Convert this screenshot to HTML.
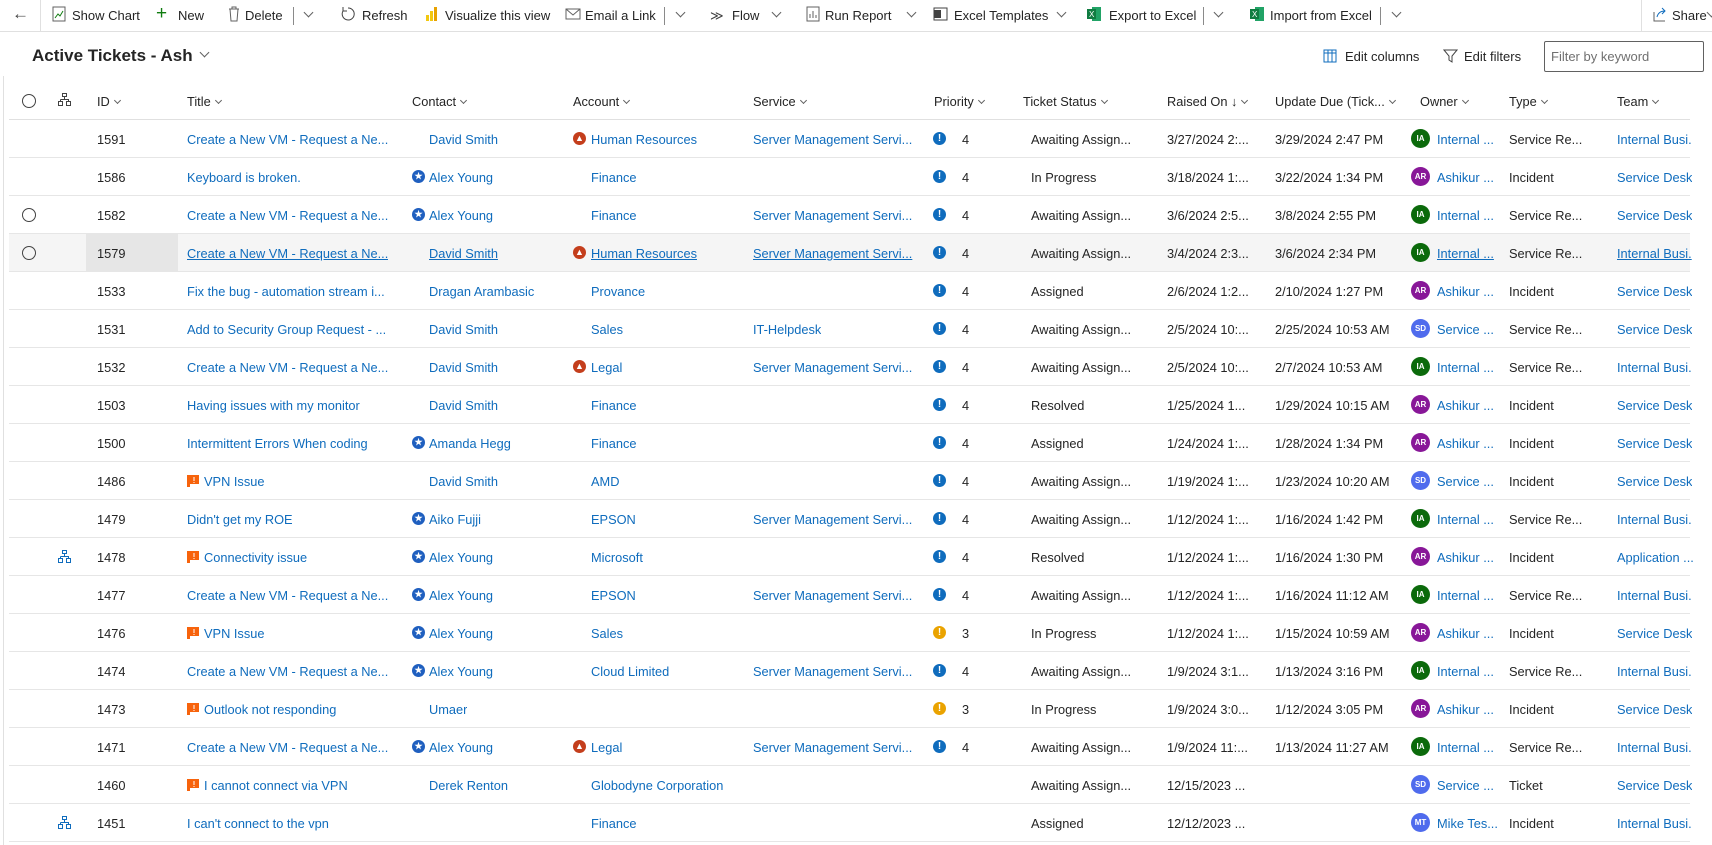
<!DOCTYPE html>
<html><head><meta charset="utf-8">
<style>
*{box-sizing:border-box;margin:0;padding:0}
body{width:1712px;height:845px;overflow:hidden;background:#fff;font-family:"Liberation Sans",Arial,sans-serif;color:#242424;position:relative}
.tb{position:absolute;left:0;top:0;width:1712px;height:32px;border-bottom:1px solid #e0e0e0;font-size:13px}
.tb span{position:absolute;top:8px;white-space:nowrap}
.tb .ic{position:absolute;top:6px}
.sep{position:absolute;top:7px;width:1px;height:18px;background:#8a8a8a}
.chev{position:absolute;top:9px;width:7px;height:7px;border-right:1px solid #616161;border-bottom:1px solid #616161;transform:rotate(45deg)}
.title{position:absolute;left:32px;top:46px;font-size:17px;font-weight:bold;color:#242424}
.grid{position:absolute;left:3px;top:76px;width:1px;height:769px;background:#e0e0e0}
.hdr{position:absolute;left:9px;top:82px;width:1681px;height:38px;border-bottom:1px solid #e0e0e0;font-size:12.8px}
.hdr span{position:absolute;top:12px;white-space:nowrap}
.hc{display:inline-block;width:5px;height:5px;border-right:1px solid #616161;border-bottom:1px solid #616161;transform:rotate(45deg);margin-left:5px;position:relative;top:-3px}
.row{position:absolute;left:9px;width:1681px;height:38px;border-bottom:1px solid #e6e6e6;font-size:12.8px}
.row>*{position:absolute;top:12px;white-space:nowrap;overflow:hidden}
.l{color:#0f6cbd}
.sel{background:#f5f5f5}
.sel .u{text-decoration:underline}
.idsel{position:absolute;left:77px;top:0!important;width:92px;height:37px;background:#e6e6e6}
.ci{position:absolute;width:13px;height:13px;border-radius:50%;top:12px!important;color:#fff;font-style:normal;text-align:center;font-size:9px;line-height:13px;font-weight:bold}
.pri{background:#0f6cbd;font-size:10px}
.pri3{background:#eaa300}
.acc{background:#c43e1c}
.con{background:#1f5fbf}
.av{position:absolute;width:19px;height:19px;border-radius:50%;color:#fff;font-size:8px;font-style:normal;font-weight:bold;text-align:center;line-height:19px;top:9px!important}
.ia{background:#0b6a0b}.ar{background:#881798}.sd{background:#4f6bed}.mt{background:#4f6bed}
.flag{position:absolute;top:13px!important;width:12px;height:12px}
.circ{position:absolute;left:13px;top:12px!important;width:14px;height:14px;border:1px solid #424242;border-radius:50%}
</style></head><body>
<div class="tb">
<span style="left:12px;top:4px;font-size:17px;color:#424242">←</span>
<div class="sep" style="left:40px;top:0;height:32px;background:#e0e0e0"></div>
<svg class="ic" style="left:52px" width="14" height="16" viewBox="0 0 14 16"><rect x="1" y="1" width="12" height="14" fill="none" stroke="#616161"/><path d="M3 12l3-4 2 2 3-5" stroke="#107c10" fill="none"/></svg><span style="left:72px">Show Chart</span>
<span style="left:156px;top:3px;font-size:19px;color:#107c10">+</span><span style="left:178px">New</span>
<svg class="ic" style="left:228px" width="12" height="16" viewBox="0 0 12 16"><path d="M1 3h10M4 3V1h4v2M2 3l1 12h6l1-12" fill="none" stroke="#616161"/></svg><span style="left:245px">Delete</span>
<div class="sep" style="left:293px"></div><div class="chev" style="left:305px"></div>
<svg class="ic" style="left:340px" width="16" height="16" viewBox="0 0 16 16"><path d="M8 2a6 6 0 1 1-5 3M3 1v4h4" fill="none" stroke="#424242"/></svg><span style="left:362px">Refresh</span>
<svg class="ic" style="left:426px" width="12" height="16" viewBox="0 0 12 16"><rect x="8" y="1" width="3" height="14" fill="#e8a200"/><rect x="4" y="5" width="3" height="10" fill="#f2c811"/><rect x="0" y="9" width="3" height="6" fill="#f2c811"/></svg><span style="left:445px">Visualize this view</span>
<svg class="ic" style="left:565px" width="16" height="16" viewBox="0 0 16 16"><rect x="1" y="3" width="14" height="10" fill="none" stroke="#616161"/><path d="M1 3l7 6 7-6" fill="none" stroke="#616161"/></svg><span style="left:585px">Email a Link</span>
<div class="sep" style="left:664px"></div><div class="chev" style="left:677px"></div>
<span style="left:710px;color:#424242">≫</span><span style="left:732px">Flow</span><div class="chev" style="left:773px"></div>
<svg class="ic" style="left:806px" width="14" height="16" viewBox="0 0 14 16"><rect x="1" y="1" width="12" height="14" fill="none" stroke="#616161"/><path d="M4 12V8M7 12V5M10 12V9" stroke="#616161"/></svg><span style="left:825px">Run Report</span><div class="chev" style="left:908px"></div>
<svg class="ic" style="left:933px" width="15" height="16" viewBox="0 0 15 16"><rect x="1" y="2" width="13" height="12" fill="none" stroke="#424242"/><rect x="1" y="4" width="7" height="8" fill="#424242"/></svg><span style="left:954px">Excel Templates</span><div class="chev" style="left:1058px"></div>
<svg class="ic" style="left:1087px" width="15" height="16" viewBox="0 0 15 16"><rect x="5" y="1" width="9" height="14" fill="#21a366"/><rect x="0" y="3" width="9" height="10" fill="#107c41"/><text x="2" y="11" font-size="8" fill="#fff" font-family="Liberation Sans">X</text></svg><span style="left:1109px">Export to Excel</span>
<div class="sep" style="left:1203px"></div><div class="chev" style="left:1215px"></div>
<svg class="ic" style="left:1250px" width="15" height="16" viewBox="0 0 15 16"><rect x="5" y="1" width="9" height="14" fill="#21a366"/><rect x="0" y="3" width="9" height="10" fill="#107c41"/><text x="2" y="11" font-size="8" fill="#fff" font-family="Liberation Sans">X</text></svg><span style="left:1270px">Import from Excel</span>
<div class="sep" style="left:1380px"></div><div class="chev" style="left:1393px"></div>
<div class="sep" style="left:1641px;top:0;height:32px;background:#e0e0e0"></div>
<svg class="ic" style="left:1653px" width="14" height="16" viewBox="0 0 14 16"><path d="M1 6v9h11" fill="none" stroke="#616161"/><path d="M4 11c1-4 4-6 8-6M9 2l3 3-3 3" fill="none" stroke="#0f6cbd"/></svg><span style="left:1672px">Share</span><div class="chev" style="left:1708px"></div>
</div>
<div class="title">Active Tickets - Ash <span class="hc" style="width:7px;height:7px;top:-5px;margin-left:4px"></span></div>
<svg style="position:absolute;left:1323px;top:49px" width="16" height="15" viewBox="0 0 16 15"><rect x="1" y="1" width="12" height="12" fill="none" stroke="#0f6cbd"/><path d="M1 4h12M5 1v12M9 1v12" stroke="#0f6cbd"/></svg>
<span style="position:absolute;left:1345px;top:49px;font-size:13px">Edit columns</span>
<svg style="position:absolute;left:1443px;top:49px" width="15" height="15" viewBox="0 0 15 15"><path d="M1 1h13l-5 6v6l-3-2V7z" fill="none" stroke="#424242"/></svg>
<span style="position:absolute;left:1464px;top:49px;font-size:13px">Edit filters</span>
<div style="position:absolute;left:1544px;top:41px;width:160px;height:31px;border:1px solid #616161;border-radius:2px;font-size:13px;color:#707070;padding:7px 6px">Filter by keyword</div>
<div class="grid"></div>
<div class="hdr">
<div class="circ" style="top:12px"></div>
<svg style="position:absolute;left:49px;top:11px" width="13" height="13" viewBox="0 0 13 13"><path d="M4.5 .5h4v3h-4zM6.5 3.5v3M2.5 6.5h8v2M2.5 6.5v2M.5 8.5h4v4h-4zM8.5 8.5h4v4h-4z" fill="none" stroke="#424242"/></svg>
<span style="left:88px">ID<i class="hc"></i></span>
<span style="left:178px">Title<i class="hc"></i></span>
<span style="left:403px">Contact<i class="hc"></i></span>
<span style="left:564px">Account<i class="hc"></i></span>
<span style="left:744px">Service<i class="hc"></i></span>
<span style="left:925px">Priority<i class="hc"></i></span>
<span style="left:1014px">Ticket Status<i class="hc"></i></span>
<span style="left:1158px">Raised On ↓<i class="hc"></i></span>
<span style="left:1266px">Update Due (Tick...<i class="hc"></i></span>
<span style="left:1411px">Owner<i class="hc"></i></span>
<span style="left:1500px">Type<i class="hc"></i></span>
<span style="left:1608px">Team<i class="hc"></i></span>
</div>

<div class="row" style="top:120px"><span style="left:88px">1591</span><span class="l" style="left:178px">Create a New VM - Request a Ne...</span><span class="l" style="left:420px">David Smith</span><i class="ci acc" style="left:564px">▲</i><span class="l" style="left:582px">Human Resources</span><span class="l" style="left:744px;width:165px">Server Management Servi...</span><i class="ci pri" style="left:924px">!</i><span style="left:953px">4</span><span style="left:1022px">Awaiting Assign...</span><span style="left:1158px">3/27/2024 2:...</span><span style="left:1266px">3/29/2024 2:47 PM</span><i class="av ia" style="left:1402px">IA</i><span class="l" style="left:1428px">Internal ...</span><span style="left:1500px">Service Re...</span><span class="l" style="left:1608px">Internal Busi.</span></div>
<div class="row" style="top:158px"><span style="left:88px">1586</span><span class="l" style="left:178px">Keyboard is broken.</span><i class="ci con" style="left:403px">★</i><span class="l" style="left:420px">Alex Young</span><span class="l" style="left:582px">Finance</span><i class="ci pri" style="left:924px">!</i><span style="left:953px">4</span><span style="left:1022px">In Progress</span><span style="left:1158px">3/18/2024 1:...</span><span style="left:1266px">3/22/2024 1:34 PM</span><i class="av ar" style="left:1402px">AR</i><span class="l" style="left:1428px">Ashikur ...</span><span style="left:1500px">Incident</span><span class="l" style="left:1608px">Service Desk</span></div>
<div class="row" style="top:196px"><div class="circ"></div><span style="left:88px">1582</span><span class="l" style="left:178px">Create a New VM - Request a Ne...</span><i class="ci con" style="left:403px">★</i><span class="l" style="left:420px">Alex Young</span><span class="l" style="left:582px">Finance</span><span class="l" style="left:744px;width:165px">Server Management Servi...</span><i class="ci pri" style="left:924px">!</i><span style="left:953px">4</span><span style="left:1022px">Awaiting Assign...</span><span style="left:1158px">3/6/2024 2:5...</span><span style="left:1266px">3/8/2024 2:55 PM</span><i class="av ia" style="left:1402px">IA</i><span class="l" style="left:1428px">Internal ...</span><span style="left:1500px">Service Re...</span><span class="l" style="left:1608px">Service Desk</span></div>
<div class="row sel" style="top:234px"><div class="idsel"></div><div class="circ"></div><span style="left:88px">1579</span><span class="l u" style="left:178px">Create a New VM - Request a Ne...</span><span class="l u" style="left:420px">David Smith</span><i class="ci acc" style="left:564px">▲</i><span class="l u" style="left:582px">Human Resources</span><span class="l u" style="left:744px;width:165px">Server Management Servi...</span><i class="ci pri" style="left:924px">!</i><span style="left:953px">4</span><span style="left:1022px">Awaiting Assign...</span><span style="left:1158px">3/4/2024 2:3...</span><span style="left:1266px">3/6/2024 2:34 PM</span><i class="av ia" style="left:1402px">IA</i><span class="l u" style="left:1428px">Internal ...</span><span style="left:1500px">Service Re...</span><span class="l u" style="left:1608px">Internal Busi.</span></div>
<div class="row" style="top:272px"><span style="left:88px">1533</span><span class="l" style="left:178px">Fix the bug - automation stream i...</span><span class="l" style="left:420px">Dragan Arambasic</span><span class="l" style="left:582px">Provance</span><i class="ci pri" style="left:924px">!</i><span style="left:953px">4</span><span style="left:1022px">Assigned</span><span style="left:1158px">2/6/2024 1:2...</span><span style="left:1266px">2/10/2024 1:27 PM</span><i class="av ar" style="left:1402px">AR</i><span class="l" style="left:1428px">Ashikur ...</span><span style="left:1500px">Incident</span><span class="l" style="left:1608px">Service Desk</span></div>
<div class="row" style="top:310px"><span style="left:88px">1531</span><span class="l" style="left:178px">Add to Security Group Request - ...</span><span class="l" style="left:420px">David Smith</span><span class="l" style="left:582px">Sales</span><span class="l" style="left:744px">IT-Helpdesk</span><i class="ci pri" style="left:924px">!</i><span style="left:953px">4</span><span style="left:1022px">Awaiting Assign...</span><span style="left:1158px">2/5/2024 10:...</span><span style="left:1266px">2/25/2024 10:53 AM</span><i class="av sd" style="left:1402px">SD</i><span class="l" style="left:1428px">Service ...</span><span style="left:1500px">Service Re...</span><span class="l" style="left:1608px">Service Desk</span></div>
<div class="row" style="top:348px"><span style="left:88px">1532</span><span class="l" style="left:178px">Create a New VM - Request a Ne...</span><span class="l" style="left:420px">David Smith</span><i class="ci acc" style="left:564px">▲</i><span class="l" style="left:582px">Legal</span><span class="l" style="left:744px;width:165px">Server Management Servi...</span><i class="ci pri" style="left:924px">!</i><span style="left:953px">4</span><span style="left:1022px">Awaiting Assign...</span><span style="left:1158px">2/5/2024 10:...</span><span style="left:1266px">2/7/2024 10:53 AM</span><i class="av ia" style="left:1402px">IA</i><span class="l" style="left:1428px">Internal ...</span><span style="left:1500px">Service Re...</span><span class="l" style="left:1608px">Internal Busi.</span></div>
<div class="row" style="top:386px"><span style="left:88px">1503</span><span class="l" style="left:178px">Having issues with my monitor</span><span class="l" style="left:420px">David Smith</span><span class="l" style="left:582px">Finance</span><i class="ci pri" style="left:924px">!</i><span style="left:953px">4</span><span style="left:1022px">Resolved</span><span style="left:1158px">1/25/2024 1...</span><span style="left:1266px">1/29/2024 10:15 AM</span><i class="av ar" style="left:1402px">AR</i><span class="l" style="left:1428px">Ashikur ...</span><span style="left:1500px">Incident</span><span class="l" style="left:1608px">Service Desk</span></div>
<div class="row" style="top:424px"><span style="left:88px">1500</span><span class="l" style="left:178px">Intermittent Errors When coding</span><i class="ci con" style="left:403px">★</i><span class="l" style="left:420px">Amanda Hegg</span><span class="l" style="left:582px">Finance</span><i class="ci pri" style="left:924px">!</i><span style="left:953px">4</span><span style="left:1022px">Assigned</span><span style="left:1158px">1/24/2024 1:...</span><span style="left:1266px">1/28/2024 1:34 PM</span><i class="av ar" style="left:1402px">AR</i><span class="l" style="left:1428px">Ashikur ...</span><span style="left:1500px">Incident</span><span class="l" style="left:1608px">Service Desk</span></div>
<div class="row" style="top:462px"><span style="left:88px">1486</span><svg class="flag" style="left:178px" viewBox="0 0 12 12"><path d="M0 0h12v9H3v3H0z" fill="#f7630c"/><path d="M7 2v4M7 7v1" stroke="#fff"/></svg><span class="l" style="left:195px">VPN Issue</span><span class="l" style="left:420px">David Smith</span><span class="l" style="left:582px">AMD</span><i class="ci pri" style="left:924px">!</i><span style="left:953px">4</span><span style="left:1022px">Awaiting Assign...</span><span style="left:1158px">1/19/2024 1:...</span><span style="left:1266px">1/23/2024 10:20 AM</span><i class="av sd" style="left:1402px">SD</i><span class="l" style="left:1428px">Service ...</span><span style="left:1500px">Incident</span><span class="l" style="left:1608px">Service Desk</span></div>
<div class="row" style="top:500px"><span style="left:88px">1479</span><span class="l" style="left:178px">Didn't get my ROE</span><i class="ci con" style="left:403px">★</i><span class="l" style="left:420px">Aiko Fujji</span><span class="l" style="left:582px">EPSON</span><span class="l" style="left:744px;width:165px">Server Management Servi...</span><i class="ci pri" style="left:924px">!</i><span style="left:953px">4</span><span style="left:1022px">Awaiting Assign...</span><span style="left:1158px">1/12/2024 1:...</span><span style="left:1266px">1/16/2024 1:42 PM</span><i class="av ia" style="left:1402px">IA</i><span class="l" style="left:1428px">Internal ...</span><span style="left:1500px">Service Re...</span><span class="l" style="left:1608px">Internal Busi.</span></div>
<div class="row" style="top:538px"><svg style="position:absolute;left:49px;top:12px" width="13" height="13" viewBox="0 0 13 13"><path d="M4.5 .5h4v3h-4zM6.5 3.5v3M2.5 6.5h8v2M2.5 6.5v2M.5 8.5h4v4h-4zM8.5 8.5h4v4h-4z" fill="none" stroke="#0f6cbd"/></svg><span style="left:88px">1478</span><svg class="flag" style="left:178px" viewBox="0 0 12 12"><path d="M0 0h12v9H3v3H0z" fill="#f7630c"/><path d="M7 2v4M7 7v1" stroke="#fff"/></svg><span class="l" style="left:195px">Connectivity issue</span><i class="ci con" style="left:403px">★</i><span class="l" style="left:420px">Alex Young</span><span class="l" style="left:582px">Microsoft</span><i class="ci pri" style="left:924px">!</i><span style="left:953px">4</span><span style="left:1022px">Resolved</span><span style="left:1158px">1/12/2024 1:...</span><span style="left:1266px">1/16/2024 1:30 PM</span><i class="av ar" style="left:1402px">AR</i><span class="l" style="left:1428px">Ashikur ...</span><span style="left:1500px">Incident</span><span class="l" style="left:1608px">Application ...</span></div>
<div class="row" style="top:576px"><span style="left:88px">1477</span><span class="l" style="left:178px">Create a New VM - Request a Ne...</span><i class="ci con" style="left:403px">★</i><span class="l" style="left:420px">Alex Young</span><span class="l" style="left:582px">EPSON</span><span class="l" style="left:744px;width:165px">Server Management Servi...</span><i class="ci pri" style="left:924px">!</i><span style="left:953px">4</span><span style="left:1022px">Awaiting Assign...</span><span style="left:1158px">1/12/2024 1:...</span><span style="left:1266px">1/16/2024 11:12 AM</span><i class="av ia" style="left:1402px">IA</i><span class="l" style="left:1428px">Internal ...</span><span style="left:1500px">Service Re...</span><span class="l" style="left:1608px">Internal Busi.</span></div>
<div class="row" style="top:614px"><span style="left:88px">1476</span><svg class="flag" style="left:178px" viewBox="0 0 12 12"><path d="M0 0h12v9H3v3H0z" fill="#f7630c"/><path d="M7 2v4M7 7v1" stroke="#fff"/></svg><span class="l" style="left:195px">VPN Issue</span><i class="ci con" style="left:403px">★</i><span class="l" style="left:420px">Alex Young</span><span class="l" style="left:582px">Sales</span><i class="ci pri pri3" style="left:924px">!</i><span style="left:953px">3</span><span style="left:1022px">In Progress</span><span style="left:1158px">1/12/2024 1:...</span><span style="left:1266px">1/15/2024 10:59 AM</span><i class="av ar" style="left:1402px">AR</i><span class="l" style="left:1428px">Ashikur ...</span><span style="left:1500px">Incident</span><span class="l" style="left:1608px">Service Desk</span></div>
<div class="row" style="top:652px"><span style="left:88px">1474</span><span class="l" style="left:178px">Create a New VM - Request a Ne...</span><i class="ci con" style="left:403px">★</i><span class="l" style="left:420px">Alex Young</span><span class="l" style="left:582px">Cloud Limited</span><span class="l" style="left:744px;width:165px">Server Management Servi...</span><i class="ci pri" style="left:924px">!</i><span style="left:953px">4</span><span style="left:1022px">Awaiting Assign...</span><span style="left:1158px">1/9/2024 3:1...</span><span style="left:1266px">1/13/2024 3:16 PM</span><i class="av ia" style="left:1402px">IA</i><span class="l" style="left:1428px">Internal ...</span><span style="left:1500px">Service Re...</span><span class="l" style="left:1608px">Internal Busi.</span></div>
<div class="row" style="top:690px"><span style="left:88px">1473</span><svg class="flag" style="left:178px" viewBox="0 0 12 12"><path d="M0 0h12v9H3v3H0z" fill="#f7630c"/><path d="M7 2v4M7 7v1" stroke="#fff"/></svg><span class="l" style="left:195px">Outlook not responding</span><span class="l" style="left:420px">Umaer</span><i class="ci pri pri3" style="left:924px">!</i><span style="left:953px">3</span><span style="left:1022px">In Progress</span><span style="left:1158px">1/9/2024 3:0...</span><span style="left:1266px">1/12/2024 3:05 PM</span><i class="av ar" style="left:1402px">AR</i><span class="l" style="left:1428px">Ashikur ...</span><span style="left:1500px">Incident</span><span class="l" style="left:1608px">Service Desk</span></div>
<div class="row" style="top:728px"><span style="left:88px">1471</span><span class="l" style="left:178px">Create a New VM - Request a Ne...</span><i class="ci con" style="left:403px">★</i><span class="l" style="left:420px">Alex Young</span><i class="ci acc" style="left:564px">▲</i><span class="l" style="left:582px">Legal</span><span class="l" style="left:744px;width:165px">Server Management Servi...</span><i class="ci pri" style="left:924px">!</i><span style="left:953px">4</span><span style="left:1022px">Awaiting Assign...</span><span style="left:1158px">1/9/2024 11:...</span><span style="left:1266px">1/13/2024 11:27 AM</span><i class="av ia" style="left:1402px">IA</i><span class="l" style="left:1428px">Internal ...</span><span style="left:1500px">Service Re...</span><span class="l" style="left:1608px">Internal Busi.</span></div>
<div class="row" style="top:766px"><span style="left:88px">1460</span><svg class="flag" style="left:178px" viewBox="0 0 12 12"><path d="M0 0h12v9H3v3H0z" fill="#f7630c"/><path d="M7 2v4M7 7v1" stroke="#fff"/></svg><span class="l" style="left:195px">I cannot connect via VPN</span><span class="l" style="left:420px">Derek Renton</span><span class="l" style="left:582px">Globodyne Corporation</span><span style="left:1022px">Awaiting Assign...</span><span style="left:1158px">12/15/2023 ...</span><i class="av sd" style="left:1402px">SD</i><span class="l" style="left:1428px">Service ...</span><span style="left:1500px">Ticket</span><span class="l" style="left:1608px">Service Desk</span></div>
<div class="row" style="top:804px"><svg style="position:absolute;left:49px;top:12px" width="13" height="13" viewBox="0 0 13 13"><path d="M4.5 .5h4v3h-4zM6.5 3.5v3M2.5 6.5h8v2M2.5 6.5v2M.5 8.5h4v4h-4zM8.5 8.5h4v4h-4z" fill="none" stroke="#0f6cbd"/></svg><span style="left:88px">1451</span><span class="l" style="left:178px">I can't connect to the vpn</span><span class="l" style="left:582px">Finance</span><span style="left:1022px">Assigned</span><span style="left:1158px">12/12/2023 ...</span><i class="av mt" style="left:1402px">MT</i><span class="l" style="left:1428px">Mike Tes...</span><span style="left:1500px">Incident</span><span class="l" style="left:1608px">Internal Busi.</span></div>
</body></html>
